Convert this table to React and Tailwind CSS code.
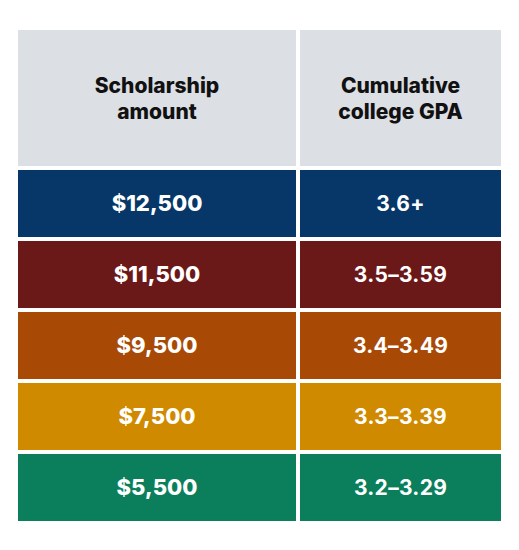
import React from 'react';

const rows = [
    { amount: '$12,500', gpa: '3.6+', bg: 'bg-[#073768]' },
    { amount: '$11,500', gpa: '3.5–3.59', bg: 'bg-[#6b1818]' },
    { amount: '$9,500', gpa: '3.4–3.49', bg: 'bg-[#a84a06]' },
    { amount: '$7,500', gpa: '3.3–3.39', bg: 'bg-[#d08a00]' },
    { amount: '$5,500', gpa: '3.2–3.29', bg: 'bg-[#0b7f5c]' },
];

const App = () => {
    return (
        <div className="w-[519px] h-[550px] bg-white pt-[30px] pl-[18px] font-['Inter',sans-serif]">
            <div className="grid grid-cols-[278px_201px] gap-[4px] w-[483px]">
                {/* Header */}
                <div className="h-[136px] bg-[#dcdfe3] flex items-center justify-center text-center text-[21px] leading-[26px] font-extrabold text-[#111] pt-[2px]">
                    Scholarship<br />amount
                </div>
                <div className="h-[136px] bg-[#dcdfe3] flex items-center justify-center text-center text-[21px] leading-[26px] font-extrabold text-[#111] pt-[2px]">
                    Cumulative<br />college GPA
                </div>

                {rows.map((row) => (
                    <React.Fragment key={row.amount}>
                        <div className={`h-[67px] ${row.bg} flex items-center justify-center text-white text-[22px] font-extrabold`}>
                            {row.amount}
                        </div>
                        <div className={`h-[67px] ${row.bg} flex items-center justify-center text-white text-[21px] font-bold tracking-[0.3px]`}>
                            {row.gpa}
                        </div>
                    </React.Fragment>
                ))}
            </div>
        </div>
    );
};

export default App;
